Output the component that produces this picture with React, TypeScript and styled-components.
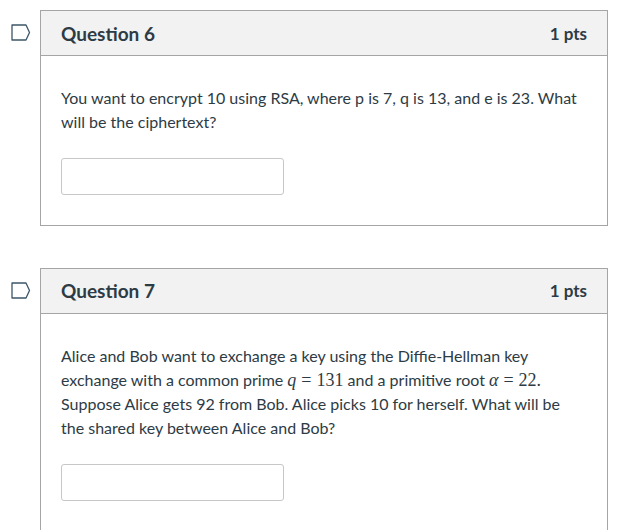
import React from "react";
import styled, { createGlobalStyle } from "styled-components";

const Global = createGlobalStyle`
  html, body { margin: 0; padding: 0; background: #fff; }
  body { font-family: Lato, "Open Sans", sans-serif; color: #2d3b45; }
`;

const Page = styled.div`
  display: flex;
  flex-direction: column;
  gap: 42px;
  padding-top: 10px;
  width: 628px;
`;

const QuestionRow = styled.div`
  display: flex;
  align-items: flex-start;
`;

const FlagCol = styled.div`
  width: 40px;
  flex: 0 0 40px;
  display: flex;
  justify-content: flex-start;
  padding-left: 11px;
  padding-top: 14px;
  box-sizing: border-box;
`;

const Card = styled.div`
  width: 568px;
  box-sizing: border-box;
  border: 1px solid #a5a5a5;
  background: #fff;
`;

const Header = styled.div`
  height: 44px;
  display: flex;
  align-items: center;
  justify-content: space-between;
  padding: 0 20px;
  background: #f2f2f2;
  border-bottom: 1px solid #a5a5a5;
`;

const Title = styled.h2`
  margin: 0;
  font-size: 19px;
  font-weight: 700;
  color: #2d3b45;
`;

const Points = styled.span`
  font-size: 17px;
  font-weight: 700;
  color: #2d3b45;
`;

const Body = styled.div`
  padding: 30px 20px 30px 20px;
`;

const Text = styled.p`
  margin: 0 0 23px;
  font-size: 16px;
  line-height: 24.3px;
  color: #2d3b45;
`;

const Answer = styled.input`
  display: block;
  width: 223px;
  height: 37px;
  box-sizing: border-box;
  border: 1px solid #c7c7c7;
  border-radius: 3px;
  background: #fff;
  margin: 0;
`;

const Math = styled.span`
  font-family: "Liberation Serif", "DejaVu Serif", serif;
  font-size: 18px;
  white-space: nowrap;
`;

const MathVar = styled.i`
  font-style: italic;
`;

const MathOp = styled.span`
  padding: 0 5px;
`;

const Flag = () => (
  <svg width="20" height="17" viewBox="0 0 20 17" fill="none">
    <path d="M1 1 H15 L18.5 8.5 L15 16 H1 Z" stroke="#3d5568" strokeWidth="1.3" strokeLinejoin="round" />
  </svg>
);

export default function App() {
  return (
    <>
      <Global />
      <Page>
        <QuestionRow>
          <FlagCol><Flag /></FlagCol>
          <Card>
            <Header>
              <Title>Question 6</Title>
              <Points>1 pts</Points>
            </Header>
            <Body>
              <Text>
                You want to encrypt 10 using RSA, where p is 7, q is 13, and e is 23. What will be the ciphertext?
              </Text>
              <Answer type="text" aria-label="Answer 6" />
            </Body>
          </Card>
        </QuestionRow>
        <QuestionRow>
          <FlagCol><Flag /></FlagCol>
          <Card>
            <Header>
              <Title>Question 7</Title>
              <Points>1 pts</Points>
            </Header>
            <Body>
              <Text>
                Alice and Bob want to exchange a key using the Diffie-Hellman key exchange with a common prime{" "}
                <Math><MathVar>q</MathVar><MathOp>=</MathOp>131</Math> and a primitive root{" "}
                <Math><MathVar>α</MathVar><MathOp>=</MathOp>22.</Math> Suppose Alice gets 92 from Bob. Alice picks 10 for herself. What will be the shared key between Alice and Bob?
              </Text>
              <Answer type="text" aria-label="Answer 7" />
            </Body>
          </Card>
        </QuestionRow>
      </Page>
    </>
  );
}
